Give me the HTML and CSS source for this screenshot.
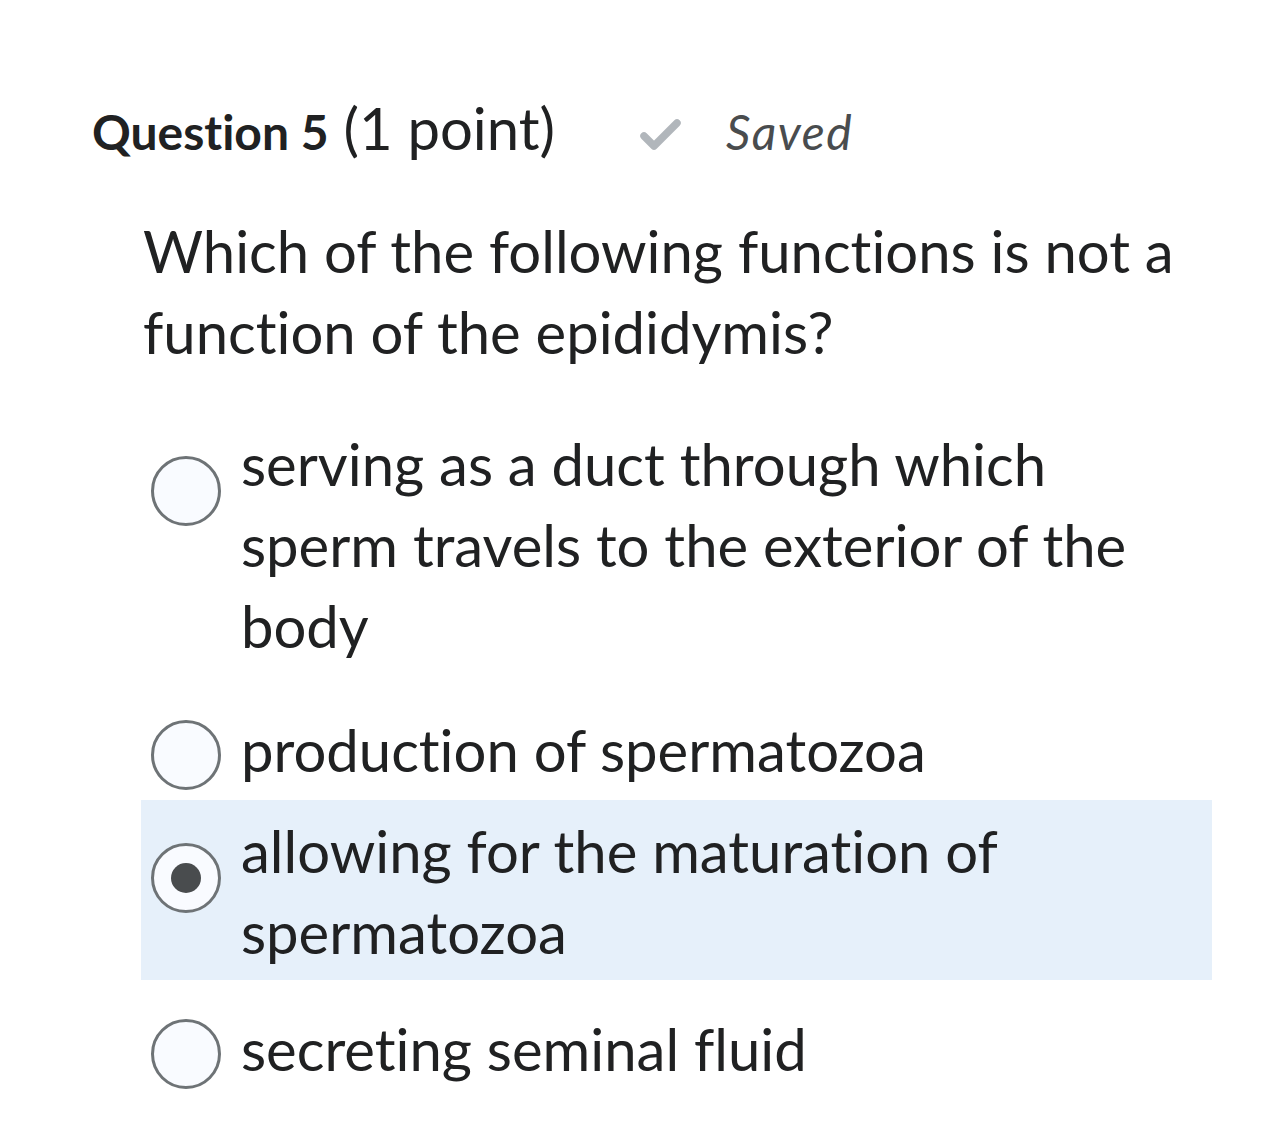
FILE: index.html
```html
<!DOCTYPE html>
<html>
<head>
<meta charset="utf-8">
<link rel="stylesheet" href="styles.css">
</head>
<body>
<div class="page">
  <div class="qhead">
    <span class="qtitle">Question 5</span>
    <span class="qpoints">(1 point)</span>
    <span class="saved">
      <svg class="check" width="48" height="40" viewBox="0 0 48 40"><path d="M7 21 L17 31 L40 8" fill="none" stroke="#b1b6bb" stroke-width="7.5" stroke-linecap="round" stroke-linejoin="round"/></svg>
      <span class="saved-text">Saved</span>
    </span>
  </div>
  <div class="qtext">Which of the following functions is not a function of the epididymis?</div>
  <div class="options">
    <label class="opt opt-multi">
      <span class="radio"></span>
      <span class="otext">serving as a duct through which sperm travels to the exterior of the body</span>
    </label>
    <label class="opt">
      <span class="radio"></span>
      <span class="otext">production of spermatozoa</span>
    </label>
    <label class="opt opt-multi opt-selected">
      <span class="radio radio-on"></span>
      <span class="otext">allowing for the maturation of spermatozoa</span>
    </label>
    <label class="opt">
      <span class="radio"></span>
      <span class="otext">secreting seminal fluid</span>
    </label>
  </div>
</div>
</body>
</html>
```
FILE: styles.css
```css
html, body {
  margin: 0;
  padding: 0;
  background: #ffffff;
}
body {
  font-family: Lato, "Noto Sans", sans-serif;
  color: #202122;
  font-variant-ligatures: none;
}
.page {
  padding: 93px 0 0 92px;
  width: 1150px;
}
.qhead {
  display: flex;
  align-items: baseline;
  height: 70px;
}
.qtitle {
  font-weight: 700;
  font-size: 48px;
}
.qpoints {
  font-size: 58px;
  margin-left: 15px;
}
.saved {
  margin-left: 82px;
  display: flex;
  align-items: baseline;
}
.check {
  align-self: center;
  position: relative;
  top: 3px;
}
.saved-text {
  font-style: italic;
  font-size: 48px;
  letter-spacing: 1.5px;
  color: #494c4e;
  margin-left: 41px;
}
.qtext {
  margin: 47px 0 0 51px;
  font-size: 58px;
  line-height: 81px;
  width: 1070px;
}
.options {
  margin: 41px 0 0 49px;
  width: 1071px;
  display: flex;
  flex-direction: column;
}
.opt {
  display: flex;
  align-items: flex-start;
  padding: 10px 0 8px 0;
}
.opt + .opt {
  margin-top: 25px;
}
.opt + .opt-selected {
  margin-top: 2px;
}
.opt-selected {
  background: #e6f0fa;
}
.opt-selected + .opt {
  margin-top: 18px;
}
.radio {
  flex: none;
  box-sizing: border-box;
  width: 70px;
  height: 70px;
  border-radius: 50%;
  border: 3px solid #6e7376;
  background: #f9fbff;
  margin: 11px 20px 0 10px;
  display: flex;
  align-items: center;
  justify-content: center;
}
.opt-multi .radio {
  margin-top: 33px;
}
.radio-on::after {
  content: "";
  width: 30px;
  height: 30px;
  border-radius: 50%;
  background: #494c4e;
}
.otext {
  font-size: 58px;
  line-height: 81px;
  width: 940px;
}
```
